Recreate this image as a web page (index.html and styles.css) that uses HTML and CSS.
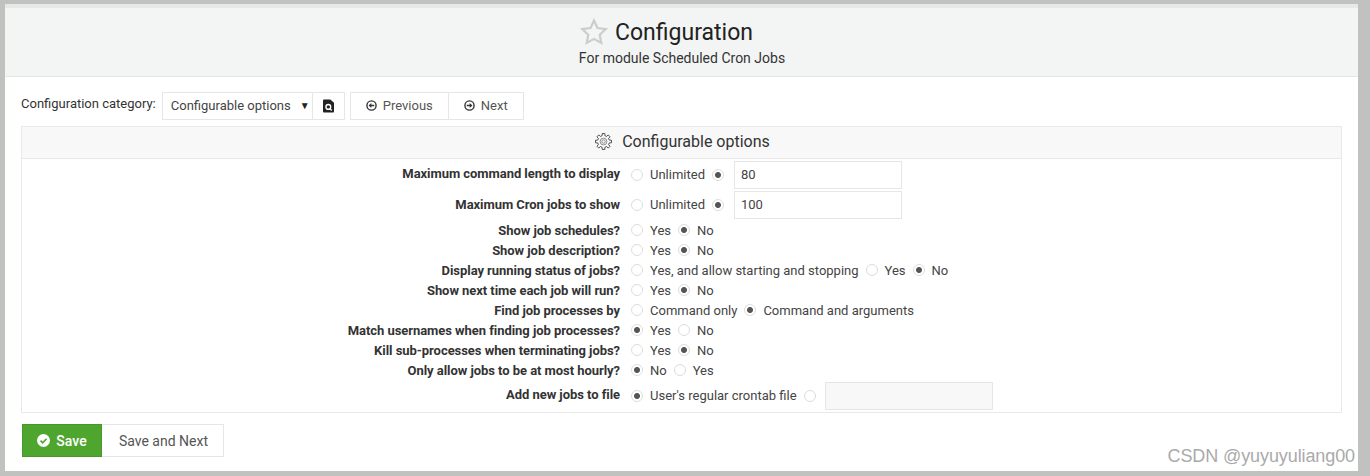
FILE: index.html
```html
<!DOCTYPE html>
<html lang="en">
<head>
  <meta charset="UTF-8">
  <title>Configuration</title>
  <link rel="stylesheet" href="styles.css">
</head>
<body>
  <div class="page">
    <header class="titulo">
      <h1>
        <svg class="estrella" viewBox="0 0 28 28" width="28" height="28"><path d="M14 2.500l3.500 7.600 8.300 1-6.100 5.700 1.600 8.200L14 20.900l-7.300 4.100 1.600-8.200-6.100-5.700 8.300-1z" fill="none" stroke="#ccc" stroke-width="2.200" stroke-linejoin="miter"/></svg>
        Configuration
      </h1>
      <p>For module Scheduled Cron Jobs</p>
    </header>

    <div class="contenido">
      <div class="barra">
        <span class="barra-label">Configuration category:</span>
        <div class="grupo">
          <span class="selector">Configurable options <i class="flecha">▼</i></span>
          <button class="btn btn-icono">
            <svg viewBox="0 0 12 14" width="12" height="14"><path d="M1 0h7l4 3.500V13a1 1 0 0 1-1 1H1a1 1 0 0 1-1-1V1a1 1 0 0 1 1-1z" fill="#222"/><circle cx="5.800" cy="8" r="2.600" fill="none" stroke="#fff" stroke-width="1.500"/><path d="M7.500 9.800l2 2" stroke="#fff" stroke-width="1.500"/></svg>
          </button>
        </div>
        <div class="grupo">
          <button class="btn">
            <svg viewBox="0 0 12 12" width="11" height="11"><circle cx="6" cy="6" r="5" fill="none" stroke="#333" stroke-width="1.500"/><path d="M2.800 6l3-2.800v1.900H9v1.800H5.800v1.900z" fill="#333"/></svg>
            Previous
          </button>
          <button class="btn">
            <svg viewBox="0 0 12 12" width="11" height="11"><circle cx="6" cy="6" r="5" fill="none" stroke="#333" stroke-width="1.500"/><path d="M9.200 6l-3-2.800v1.900H3v1.800h3.200v1.900z" fill="#333"/></svg>
            Next
          </button>
        </div>
      </div>

      <section class="panel">
        <h2 class="panel-titulo">
          <svg viewBox="-10 -10 20 20" width="17" height="17" fill="none" stroke="#444" stroke-width="1.100"><polygon points="-1.690,-6.790 -1.490,-9.380 1.490,-9.380 1.690,-6.790 3.610,-6 5.580,-7.690 7.690,-5.580 6,-3.610 6.790,-1.690 9.380,-1.490 9.380,1.490 6.790,1.690 6,3.610 7.690,5.580 5.580,7.690 3.610,6 1.690,6.790 1.490,9.380 -1.490,9.380 -1.690,6.790 -3.610,6 -5.580,7.690 -7.690,5.580 -6,3.610 -6.790,1.690 -9.380,1.490 -9.380,-1.490 -6.790,-1.690 -6,-3.610 -7.690,-5.580 -5.580,-7.690 -3.610,-6"/><circle r="4" stroke="#888"/><circle r="2" stroke="#888"/></svg>
          Configurable options
        </h2>
        <div class="opciones">
          <div class="fila fila-alta">
            <label>Maximum command length to display</label>
            <div class="campo">
              <input type="radio" name="a"><span>Unlimited</span>
              <input type="radio" name="a" checked>
              <input class="texto" type="text" value="80">
            </div>
          </div>
          <div class="fila fila-alta fila-segunda">
            <label>Maximum Cron jobs to show</label>
            <div class="campo">
              <input type="radio" name="b"><span>Unlimited</span>
              <input type="radio" name="b" checked>
              <input class="texto" type="text" value="100">
            </div>
          </div>
          <div class="fila">
            <label>Show job schedules?</label>
            <div class="campo">
              <input type="radio" name="c"><span>Yes</span>
              <input type="radio" name="c" checked><span>No</span>
            </div>
          </div>
          <div class="fila">
            <label>Show job description?</label>
            <div class="campo">
              <input type="radio" name="d"><span>Yes</span>
              <input type="radio" name="d" checked><span>No</span>
            </div>
          </div>
          <div class="fila">
            <label>Display running status of jobs?</label>
            <div class="campo">
              <input type="radio" name="e"><span>Yes, and allow starting and stopping</span>
              <input type="radio" name="e"><span>Yes</span>
              <input type="radio" name="e" checked><span>No</span>
            </div>
          </div>
          <div class="fila">
            <label>Show next time each job will run?</label>
            <div class="campo">
              <input type="radio" name="f"><span>Yes</span>
              <input type="radio" name="f" checked><span>No</span>
            </div>
          </div>
          <div class="fila">
            <label>Find job processes by</label>
            <div class="campo">
              <input type="radio" name="g"><span>Command only</span>
              <input type="radio" name="g" checked><span>Command and arguments</span>
            </div>
          </div>
          <div class="fila">
            <label>Match usernames when finding job processes?</label>
            <div class="campo">
              <input type="radio" name="h" checked><span>Yes</span>
              <input type="radio" name="h"><span>No</span>
            </div>
          </div>
          <div class="fila">
            <label>Kill sub-processes when terminating jobs?</label>
            <div class="campo">
              <input type="radio" name="i"><span>Yes</span>
              <input type="radio" name="i" checked><span>No</span>
            </div>
          </div>
          <div class="fila">
            <label>Only allow jobs to be at most hourly?</label>
            <div class="campo">
              <input type="radio" name="j" checked><span>No</span>
              <input type="radio" name="j"><span>Yes</span>
            </div>
          </div>
          <div class="fila fila-ultima">
            <label>Add new jobs to file</label>
            <div class="campo">
              <input type="radio" name="k" checked><span>User's regular crontab file</span>
              <input type="radio" name="k">
              <input class="texto" type="text" disabled>
            </div>
          </div>
        </div>
      </section>

      <div class="acciones">
        <button class="btn-guardar">
          <svg viewBox="0 0 14 14" width="13" height="13"><circle cx="7" cy="7" r="7" fill="#fff"/><path d="M3.800 7.200l2.300 2.300 4.200-4.400" fill="none" stroke="#4fa62f" stroke-width="1.800"/></svg>
          Save
        </button>
        <button class="btn-siguiente">Save and Next</button>
      </div>
    </div>

    <div class="marca">CSDN @yuyuyuliang00</div>
  </div>
</body>
</html>
```

FILE: styles.css
```css
* { box-sizing: border-box; }
html, body { height: 100%; }
body { margin: 0; padding: 4px 12px 5px 5px; background: #c0c2c0; font-family: Roboto, Arial, sans-serif; font-size: 13px; color: #333; }
.page { position: relative; height: 467px; background: #fff; border-top: 4px solid #e8e8e8; }

.titulo { height: 69px; background: #f3f5f4; border-bottom: 1px solid #e6e6e6; text-align: center; padding-top: 6px; }
.titulo h1 { margin: 0; height: 36px; padding-right: 30px; display: flex; justify-content: center; align-items: center; gap: 7px; font-size: 23px; font-weight: 400; color: #222; }
.titulo p { margin: 0 0 0 1px; font-size: 14px; color: #333; }

.contenido { padding: 15px 16px 0; }

.barra { display: flex; align-items: center; height: 28px; }
.barra-label { color: #333; margin-right: 6px; margin-top: -5px; }
.grupo { display: flex; margin-right: 5px; }
.selector { display: flex; align-items: center; justify-content: space-between; width: 151px; height: 28px; padding: 0 2px 1px 8px; border: 1px solid #e6e6e6; color: #444; }
.flecha { font-style: normal; font-size: 10px; color: #222; }
.btn { display: flex; align-items: center; gap: 6px; height: 28px; padding: 0 15px 1px; margin-left: -1px; border: 1px solid #e6e6e6; background: #fff; color: #555; font: 13px Roboto, Arial, sans-serif; }
.grupo:last-child .btn:first-child { margin-left: 0; }
.btn-icono { width: 33px; padding: 0 10px; }

.panel { margin-top: 6px; border: 1px solid #e9e9e9; }
.panel-titulo { margin: 0; height: 32px; padding: 0 0 2px 2px; display: flex; justify-content: center; align-items: center; gap: 10px; background: #f7f8f7; border-bottom: 1px solid #e9e9e9; font-size: 16px; font-weight: 400; color: #333; }
.opciones { padding: 1px 0 0; }
.fila { display: grid; grid-template-columns: 598px 1fr; column-gap: 11px; align-items: center; height: 20px; }
.fila-alta { height: 30px; }
.fila-ultima { height: 32px; }
.fila label { text-align: right; font-weight: 700; color: #333; letter-spacing: -.05px; }
.fila-alta label, .fila-ultima label { margin-bottom: 4px; }
.fila-segunda label { margin-bottom: 2px; }
.campo { display: flex; align-items: center; color: #444; }
.campo span { margin-right: 7px; }
.fila-alta span, .fila-ultima span { margin-bottom: 2px; }
.campo input[type=radio] { appearance: none; width: 12px; height: 12px; margin: 0 7px 0 0; border: 1px solid #ddd; border-radius: 50%; background: #fff; flex: none; }
.campo input[type=radio]:checked { background: radial-gradient(circle, #555 0 2.500px, #fff 3.500px); }
.texto { width: 168px; height: 28px; margin-left: 3px; padding: 0 6px 2px; border: 1px solid #e6e6e6; font: 13px Roboto, Arial, sans-serif; color: #444; }
.texto:disabled { background: #f8f8f8; margin-left: 2px; }

.acciones { display: flex; margin-top: 11px; margin-left: 1px; }
.btn-guardar { display: flex; align-items: center; justify-content: center; gap: 6px; width: 80px; height: 33px; background: #4fa62f; border: 1px solid #46982a; color: #fff; font: 500 14px Roboto, Arial, sans-serif; }
.btn-siguiente { width: 122px; height: 33px; padding-left: 8px; background: #fff; border: 1px solid #e6e6e6; border-left: 0; color: #555; font: 14px Roboto, Arial, sans-serif; }

.marca { position: absolute; right: 3px; bottom: 4px; font-family: "Liberation Sans", Arial, sans-serif; font-size: 18px; letter-spacing: -.1px; color: #aaa; }
```
